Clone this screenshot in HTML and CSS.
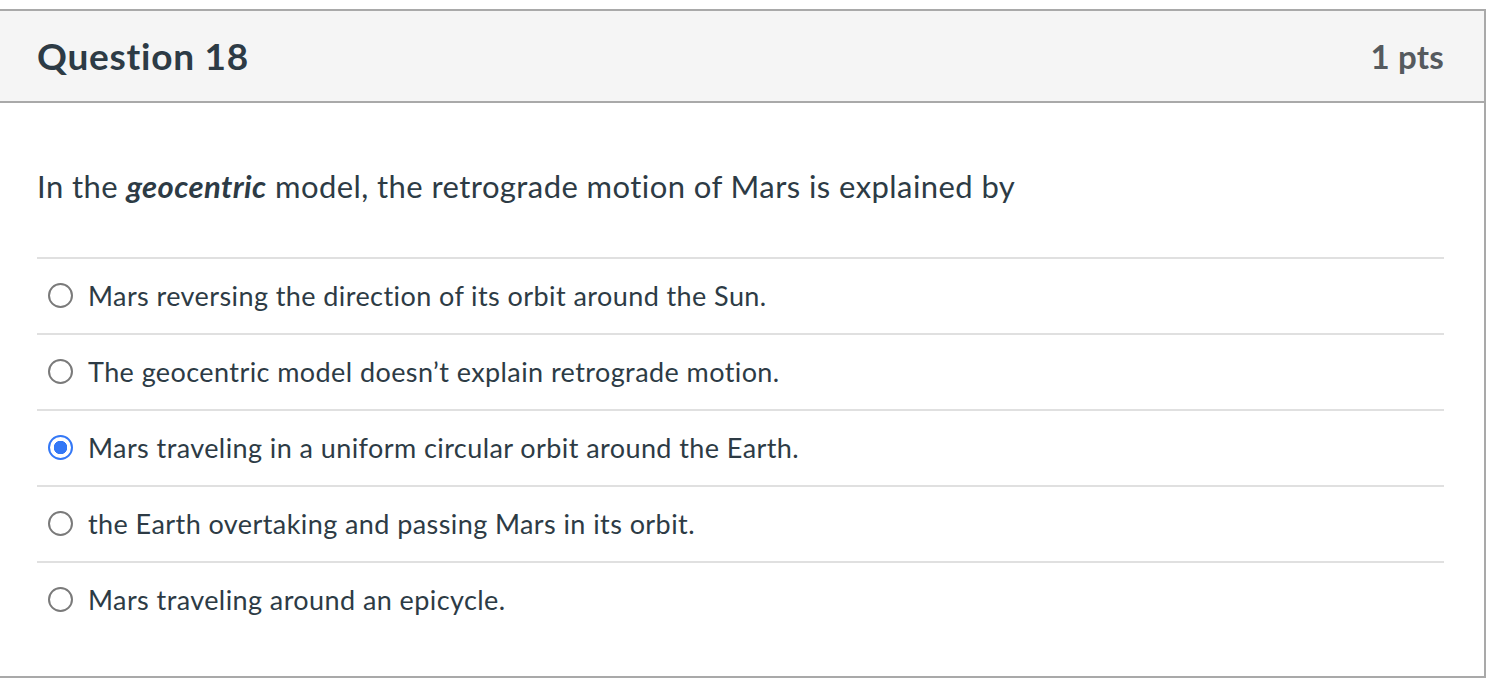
FILE: index.html
```html
<!DOCTYPE html>
<html>
<head>
<meta charset="utf-8">
<link rel="stylesheet" href="styles.css">
</head>
<body>
<div class="question">
  <div class="q-header">
    <h2 class="q-title">Question 18</h2>
    <div class="q-points">1 pts</div>
  </div>
  <div class="q-body">
    <p class="q-text">In the <strong><em>geocentric</em></strong> model, the retrograde motion of Mars is explained by</p>
    <div class="answers">
      <div class="answer">
        <span class="radio"></span>
        <span class="label">Mars reversing the direction of its orbit around the Sun.</span>
      </div>
      <div class="answer">
        <span class="radio"></span>
        <span class="label">The geocentric model doesn’t explain retrograde motion.</span>
      </div>
      <div class="answer">
        <span class="radio checked"></span>
        <span class="label">Mars traveling in a uniform circular orbit around the Earth.</span>
      </div>
      <div class="answer">
        <span class="radio"></span>
        <span class="label">the Earth overtaking and passing Mars in its orbit.</span>
      </div>
      <div class="answer">
        <span class="radio"></span>
        <span class="label">Mars traveling around an epicycle.</span>
      </div>
    </div>
  </div>
</div>
</body>
</html>
```
FILE: styles.css
```css
html, body {
  margin: 0;
  padding: 0;
  background: #ffffff;
  font-family: Lato, "Open Sans", "Liberation Sans", sans-serif;
  color: #2d3b45;
}

.question {
  margin-top: 9px;
  width: 1486px;
  box-sizing: border-box;
  border-top: 2px solid #a9a9a9;
  border-right: 2px solid #a9a9a9;
  border-bottom: 2px solid #a9a9a9;
}

.q-header {
  height: 92px;
  box-sizing: border-box;
  background: #f5f5f5;
  border-bottom: 2px solid #a9a9a9;
  display: flex;
  align-items: center;
  justify-content: space-between;
  padding: 0 40px 0 37px;
}

.q-title {
  margin: 0;
  font-size: 37px;
  letter-spacing: 0.75px;
  font-weight: 700;
  color: #2d3b45;
  position: relative;
  top: -1px;
}

.q-points {
  font-size: 33px;
  letter-spacing: 0.2px;
  font-weight: 700;
  color: #555a5e;
}

.q-body {
  padding: 65px 40px 39px 37px;
}

.q-text {
  margin: 0 0 53px 0;
  font-size: 31px;
  letter-spacing: 0.43px;
  line-height: 36px;
}

.q-text strong {
  font-weight: 700;
}

.answer {
  height: 76px;
  box-sizing: border-box;
  border-top: 2px solid #e0e0e0;
  display: flex;
  align-items: center;
  padding-left: 11px;
  padding-bottom: 1px;
}

.radio {
  width: 25px;
  height: 25px;
  box-sizing: border-box;
  border: 2px solid #7a7a7a;
  border-radius: 50%;
  background: #fff;
  flex: none;
}

.radio.checked {
  border: 2px solid #3478f6;
  background: radial-gradient(circle, #3478f6 0 6.5px, #ffffff 7px);
}

.label {
  margin-left: 15px;
  font-size: 27px;
  letter-spacing: 0.42px;
  line-height: 32px;
}
```
